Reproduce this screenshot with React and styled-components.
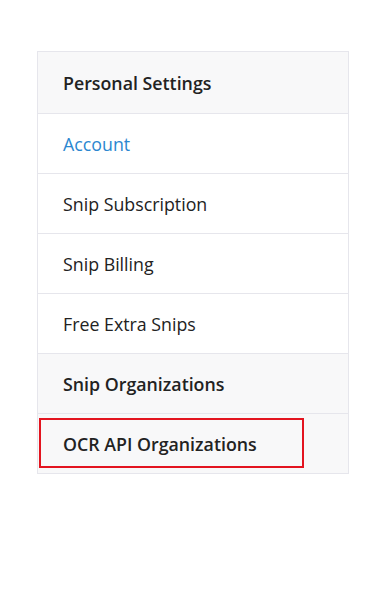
import React from "react";
import styled, { createGlobalStyle } from "styled-components";

const Global = createGlobalStyle`
  html, body { margin: 0; padding: 0; background: #fff; }
  body { font-family: "Open Sans", "Noto Sans", sans-serif; }
`;

const Page = styled.div`
  padding: 51px 0 0 37px;
`;

const Card = styled.div`
  width: 310px;
  border: 1px solid #e6e6ec;
  display: flex;
  flex-direction: column;
`;

const Row = styled.div`
  position: relative;
  height: ${(p) => (p.first ? "61px" : "59px")};
  display: flex;
  align-items: center;
  padding-left: 25px;
  font-size: 17.8px;
  color: ${(p) => (p.active ? "#2b87d0" : "#222")};
  font-weight: ${(p) => (p.heading ? 600 : 400)};
  background: ${(p) => (p.heading ? "#f8f8f9" : "#fff")};
  border-top: ${(p) => (p.first ? "none" : "1px solid #e6e6ec")};
`;

const Highlight = styled.div`
  position: absolute;
  left: 1px;
  top: 4px;
  width: 261px;
  height: 46px;
  border: 2px solid #e3141f;
`;

const items = [
  { label: "Personal Settings", heading: true },
  { label: "Account", active: true },
  { label: "Snip Subscription" },
  { label: "Snip Billing" },
  { label: "Free Extra Snips" },
  { label: "Snip Organizations", heading: true },
  { label: "OCR API Organizations", heading: true, marked: true },
];

export default function App() {
  return (
    <Page>
      <Global />
      <Card>
        {items.map((it, i) => (
          <Row key={it.label} first={i === 0} heading={it.heading} active={it.active}>
            {it.label}
            {it.marked && <Highlight />}
          </Row>
        ))}
      </Card>
    </Page>
  );
}
